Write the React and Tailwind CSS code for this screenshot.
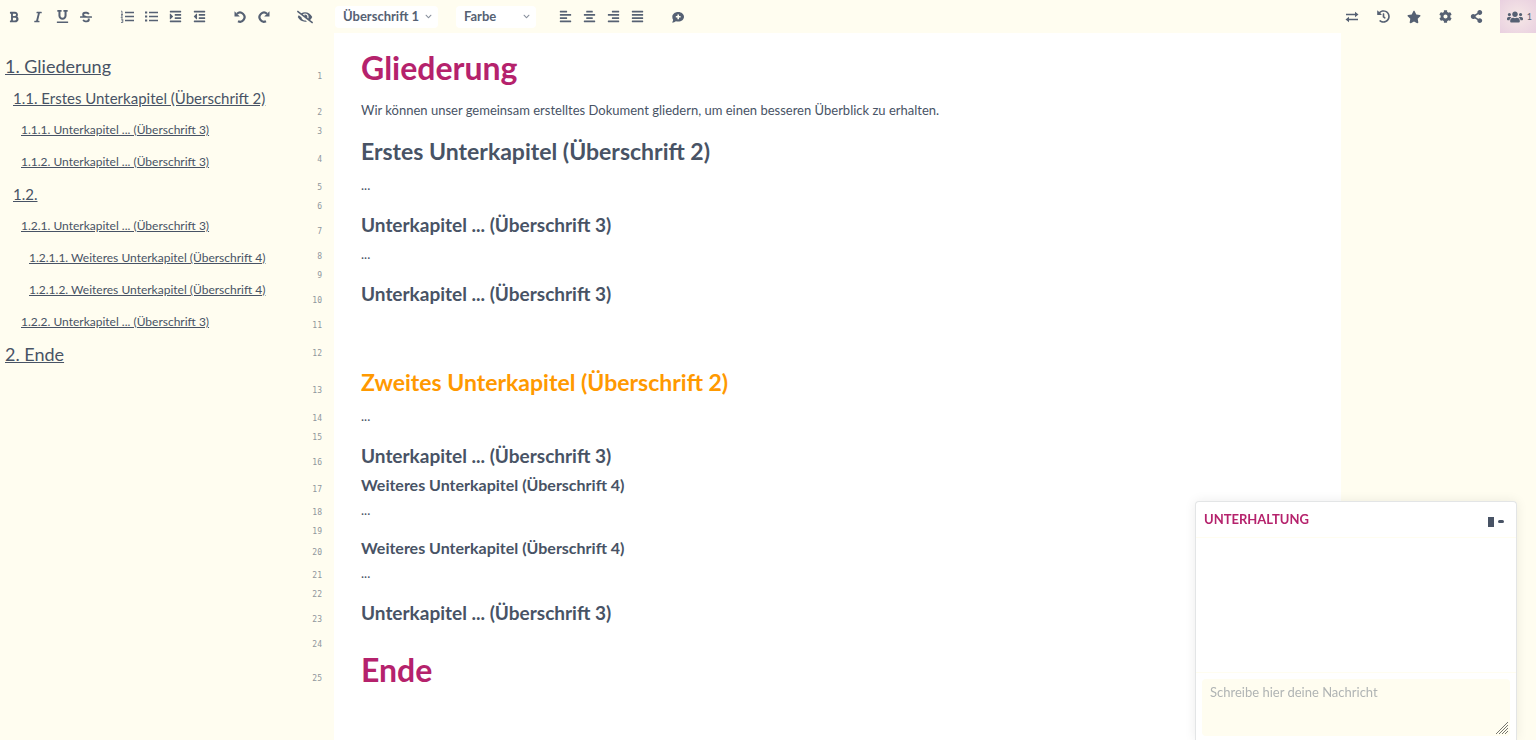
import React from 'react'
import {
  FaAlignCenter,
  FaAlignJustify,
  FaAlignLeft,
  FaAlignRight,
  FaBold,
  FaChevronDown,
  FaCog,
  FaEyeSlash,
  FaHistory,
  FaIndent,
  FaItalic,
  FaOutdent,
  FaShareAlt,
  FaStar,
  FaStrikethrough,
  FaUnderline,
  FaUsers
} from 'react-icons/fa'

const LINES = [
  { type: 'h1', text: 'Gliederung' },
  { type: 'p', text: 'Wir können unser gemeinsam erstelltes Dokument gliedern, um einen besseren Überblick zu erhalten.' },
  { type: 'p', text: '' },
  { type: 'h2', text: 'Erstes Unterkapitel (Überschrift 2)' },
  { type: 'p', text: '...' },
  { type: 'p', text: '' },
  { type: 'h3', text: 'Unterkapitel ... (Überschrift 3)' },
  { type: 'p', text: '...' },
  { type: 'p', text: '' },
  { type: 'h3', text: 'Unterkapitel ... (Überschrift 3)' },
  { type: 'p', text: '' },
  { type: 'h2', text: '' },
  { type: 'h2', text: 'Zweites Unterkapitel (Überschrift 2)', color: 'text-[#ff9900]' },
  { type: 'p', text: '...' },
  { type: 'p', text: '' },
  { type: 'h3', text: 'Unterkapitel ... (Überschrift 3)' },
  { type: 'h4', text: 'Weiteres Unterkapitel (Überschrift 4)' },
  { type: 'p', text: '...' },
  { type: 'p', text: '' },
  { type: 'h4', text: 'Weiteres Unterkapitel (Überschrift 4)' },
  { type: 'p', text: '...' },
  { type: 'p', text: '' },
  { type: 'h3', text: 'Unterkapitel ... (Überschrift 3)' },
  { type: 'p', text: '' },
  { type: 'h1', text: 'Ende' }
]

const LINE_STYLES = {
  h1: { row: 'h-[34px] mb-[17px]', text: 'text-[32px] leading-[37px] font-bold', color: 'text-[#b5226c]' },
  h2: { row: 'h-7 mb-[9px]', text: 'text-[23px] leading-[26px] font-bold' },
  h3: { row: 'h-[25px] mb-1.5', text: 'text-[19px] leading-[23px] font-bold' },
  h4: { row: 'h-[21px] mb-1', text: 'text-base leading-[19px] font-bold' },
  p: { row: 'h-[19px]', text: 'text-[13px] leading-[21px]' }
}

const TOC_STYLES = {
  1: 'pl-[5px] text-lg',
  2: 'pl-[13px] text-[15px]',
  3: 'pl-[21px] text-xs',
  4: 'pl-[29px] text-xs'
}

const TOC = [
  { level: 1, text: '1. Gliederung' },
  { level: 2, text: '1.1. Erstes Unterkapitel (Überschrift 2)' },
  { level: 3, text: '1.1.1. Unterkapitel ... (Überschrift 3)' },
  { level: 3, text: '1.1.2. Unterkapitel ... (Überschrift 3)' },
  { level: 2, text: '1.2.' },
  { level: 3, text: '1.2.1. Unterkapitel ... (Überschrift 3)' },
  { level: 4, text: '1.2.1.1. Weiteres Unterkapitel (Überschrift 4)' },
  { level: 4, text: '1.2.1.2. Weiteres Unterkapitel (Überschrift 4)' },
  { level: 3, text: '1.2.2. Unterkapitel ... (Überschrift 3)' },
  { level: 1, text: '2. Ende' }
]

const UndoIcon = ({ className = '' }) => (
  <svg viewBox="0 0 14 14" className={`h-3.5 w-3.5 ${className}`} fill="none" aria-hidden="true">
    <path d="M4 3.800A4.500 4.500 0 1 1 5 11.200" stroke="currentColor" strokeWidth="2.200" />
    <path d="M1.500 1.200v5.300h5.300z" fill="currentColor" />
  </svg>
)

const ListOlIcon = () => (
  <svg viewBox="0 0 14 14" className="h-3.5 w-3.5" fill="none" stroke="currentColor" aria-hidden="true">
    <path d="M5 2.500h9M5 6.500h9M5 10.500h9" strokeWidth="1.600" />
    <path d="M1 1.200h1v3M1 4.500h2M1 5.700h1.500L1 7.800h2M1 9.200h1.800v3.300H1M1.500 10.800h1.300" strokeWidth=".8" />
  </svg>
)

const ListUlIcon = () => (
  <svg viewBox="0 0 14 14" className="h-3.5 w-3.5" fill="none" stroke="currentColor" aria-hidden="true">
    <path d="M5 2.500h9M5 6.500h9M5 10.500h9" strokeWidth="1.600" />
    <path d="M1 2.500h2.200M1 6.500h2.200M1 10.500h2.200" strokeWidth="2" />
  </svg>
)

const ExchangeIcon = () => (
  <svg viewBox="0 0 14 14" className="h-3.5 w-3.5" aria-hidden="true">
    <path d="M1 4.500h10M3 9.500h10" fill="none" stroke="currentColor" strokeWidth="1.600" />
    <path d="M10 1.800l3.500 2.700L10 7.200zM4 6.800v5.400L.5 9.500z" fill="currentColor" />
  </svg>
)

const CommentIcon = () => (
  <svg viewBox="0 0 14 12" className="h-3 w-3.5" aria-hidden="true">
    <path
      fill="currentColor"
      fillRule="evenodd"
      d="M7.2 1C10.600 1 13 3.200 13 5.800s-2.400 4.800-5.800 4.800c-.8 0-1.600-.1-2.300-.4C3.900 11 2.600 11.500 1 11.500c.6-.7 1.100-1.500 1.200-2.500C1.500 8.100 1.300 7 1.300 5.800 1.300 3.200 3.800 1 7.200 1zM6.400 3.400V5H4.800v1.600h1.600v1.600H8V6.600h1.600V5H8V3.400z"
    />
  </svg>
)

const ToolButton = ({ label, children }) => (
  <button type="button" aria-label={label} title={label} className="flex h-6 w-6 items-center justify-center">
    {children}
  </button>
)

const ToolSelect = ({ label, value, width }) => (
  <div className={`relative flex items-center rounded-sm bg-white ${width}`}>
    <select aria-label={label} className="h-[22px] w-full appearance-none bg-transparent pl-2 text-[13px] font-bold">
      <option>{value}</option>
    </select>
    <FaChevronDown className="pointer-events-none absolute right-1.5 h-[7px] w-[7px] opacity-70" />
  </div>
)

const Toolbar = () => (
  <header className="flex h-[33px] items-center justify-between text-[#566173]">
    <div className="flex items-center pl-0.5">
      <div className="flex">
        <ToolButton label="Fett"><FaBold className="h-3 w-3" /></ToolButton>
        <ToolButton label="Kursiv"><FaItalic className="h-3 w-3" /></ToolButton>
        <ToolButton label="Unterstrichen"><FaUnderline className="h-[13px] w-[13px]" /></ToolButton>
        <ToolButton label="Durchgestrichen"><FaStrikethrough className="h-3 w-3" /></ToolButton>
      </div>
      <div className="ml-[17px] flex">
        <ToolButton label="Nummerierte Liste"><ListOlIcon /></ToolButton>
        <ToolButton label="Ungeordnete Liste"><ListUlIcon /></ToolButton>
        <ToolButton label="Einrücken"><FaIndent className="h-[13px] w-[13px]" /></ToolButton>
        <ToolButton label="Ausrücken"><FaOutdent className="h-[13px] w-[13px]" /></ToolButton>
      </div>
      <div className="ml-[17px] flex">
        <ToolButton label="Rückgängig"><UndoIcon /></ToolButton>
        <ToolButton label="Wiederholen"><UndoIcon className="-scale-x-100" /></ToolButton>
      </div>
      <div className="ml-[17px] flex">
        <ToolButton label="Autorenfarben zurücksetzen"><FaEyeSlash className="h-4 w-4" /></ToolButton>
      </div>
      <div className="ml-[18px] flex gap-[18px]">
        <ToolSelect label="Überschrift" value="Überschrift 1" width="w-[103px]" />
        <ToolSelect label="Farbe" value="Farbe" width="w-20" />
      </div>
      <div className="ml-[17px] flex">
        <ToolButton label="Linksbündig"><FaAlignLeft className="h-[13px] w-[13px]" /></ToolButton>
        <ToolButton label="Zentriert"><FaAlignCenter className="h-[13px] w-[13px]" /></ToolButton>
        <ToolButton label="Rechtsbündig"><FaAlignRight className="h-[13px] w-[13px]" /></ToolButton>
        <ToolButton label="Blocksatz"><FaAlignJustify className="h-[13px] w-[13px]" /></ToolButton>
      </div>
      <div className="ml-[17px] flex">
        <ToolButton label="Kommentar hinzufügen"><CommentIcon /></ToolButton>
      </div>
    </div>
    <div className="flex items-center self-stretch">
      <div className="mr-3 flex gap-[7px]">
        <ToolButton label="Import/Export"><ExchangeIcon /></ToolButton>
        <ToolButton label="Bearbeitungsverlauf"><FaHistory className="h-[13px] w-[13px]" /></ToolButton>
        <ToolButton label="Version speichern"><FaStar className="h-3.5 w-3.5" /></ToolButton>
        <ToolButton label="Einstellungen"><FaCog className="h-[13px] w-[13px]" /></ToolButton>
        <ToolButton label="Teilen"><FaShareAlt className="h-[13px] w-[13px]" /></ToolButton>
      </div>
      <button
        type="button"
        aria-label="Benutzer anzeigen"
        className="flex w-9 items-center justify-end gap-1 self-stretch bg-radial from-[#f6e8e6] to-[#e9d0e0] pr-1 text-[9px]"
      >
        <FaUsers className="h-4 w-4" />
        <span>1</span>
      </button>
    </div>
  </header>
)

const TableOfContents = () => (
  <nav aria-label="Inhaltsverzeichnis" className="w-[300px] shrink-0 pt-[17px]">
    <ul>
      {TOC.map((item, index) => (
        <li key={index} className={`flex h-8 items-center whitespace-nowrap ${TOC_STYLES[item.level]}`}>
          <a href="#" className="underline">{item.text}</a>
        </li>
      ))}
    </ul>
  </nav>
)

const PadLine = ({ number, line }) => {
  const Tag = line.type
  const style = LINE_STYLES[line.type]
  return (
    <div className={`flex items-end ${style.row}`}>
      <span className="w-[22px] shrink-0 text-right font-['DejaVu_Sans_Mono',monospace] text-[8px] leading-[13px] text-[#8f969d]">
        {number}
      </span>
      <Tag className={`self-start pl-[39px] ${style.text} ${line.color || style.color || ''}`}>{line.text}</Tag>
    </div>
  )
}

const ResizeGrip = () => (
  <svg viewBox="0 0 12 12" className="pointer-events-none absolute right-0.5 bottom-0.5 h-3 w-3" aria-hidden="true">
    <path d="M0 12L12 0M3 12l9-9M6 12l6-6M9 12l3-3" stroke="#77776f" strokeWidth="1" />
  </svg>
)

const Chat = () => (
  <section
    aria-label="Unterhaltung"
    className="fixed right-[19px] bottom-0 flex h-[239px] w-[322px] flex-col rounded-t-sm border border-b-0 border-[#e3e5e6] bg-white shadow-[0_0_12px_rgba(0,0,0,0.08)]"
  >
    <div className="flex h-9 items-center justify-between border-b border-[#fffdf0] pr-2.5 pl-2">
      <h2 className="text-[13px] font-bold text-[#b5226c]">UNTERHALTUNG</h2>
      <div className="flex items-center gap-1 pt-1">
        <button type="button" aria-label="Chat anheften" className="h-2.5 w-1.5 bg-[#485365]" />
        <button type="button" aria-label="Chat minimieren" className="flex h-2.5 w-2 items-center">
          <span className="h-[3px] w-1.5 rounded-full bg-[#485365]" />
        </button>
      </div>
    </div>
    <div className="grow" />
    <div className="border-t border-[#fffdf0] px-1.5 pt-1.5 pb-1">
      <div className="relative">
        <textarea
          aria-label="Nachricht"
          placeholder="Schreibe hier deine Nachricht"
          className="block h-[57px] w-full resize-none rounded-sm bg-[#fffdf0] px-2 py-1 text-[13px] placeholder:text-[#b0b4b4]"
        />
        <ResizeGrip />
      </div>
    </div>
  </section>
)

const App = () => (
  <div className="flex min-h-screen flex-col bg-[#fffdf0] font-[Lato,sans-serif] text-[#485365]">
    <Toolbar />
    <div className="flex grow">
      <TableOfContents />
      <main className="mr-[195px] grow bg-linear-to-r from-[#fffdf0] from-[34px] to-white to-[34px] pt-4">
        {LINES.map((line, index) => (
          <PadLine key={index} number={index + 1} line={line} />
        ))}
      </main>
    </div>
    <Chat />
  </div>
)

export default App
